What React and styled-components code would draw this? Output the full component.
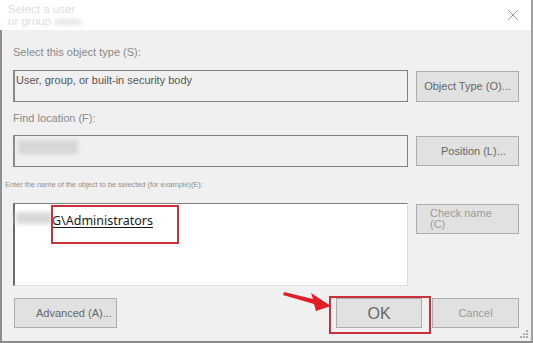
import React from 'react';
import styled, { createGlobalStyle } from 'styled-components';

const GlobalStyle = createGlobalStyle`
  html, body {
    margin: 0;
    padding: 0;
    background: #ffffff;
  }
  * { box-sizing: border-box; }
`;

const Window = styled.div`
  position: relative;
  width: 533px;
  height: 343px;
  display: flex;
  flex-direction: column;
  font-family: "Liberation Sans", Arial, sans-serif;
  background: #f0f0f0;
  border-right: 2px solid #a0a0a0;
  border-bottom: 2px solid #8c8c8c;
  overflow: hidden;
`;

const TitleBar = styled.div`
  height: 30px;
  background: #ffffff;
  display: flex;
  justify-content: space-between;
  align-items: flex-start;
  padding: 3px 12px 0 8px;
  flex-shrink: 0;
`;

const Title = styled.div`
  display: flex;
  flex-direction: column;
`;

const TitleLine = styled.div`
  color: #dedede;
  font-size: 11.5px;
  line-height: 12px;
  height: 12px;
  white-space: nowrap;
`;

const Blur = styled.span`
  display: inline-block;
  width: ${p => p.w}px;
  height: ${p => p.h}px;
  background: ${p => p.c || '#e6e6e6'};
  filter: blur(2px);
  vertical-align: middle;
  margin-left: ${p => p.ml || 0}px;
`;

const Close = styled.div`
  margin-top: 6px;
  display: flex;
`;

const Body = styled.div`
  flex: 1;
  display: flex;
  flex-direction: column;
  border-left: 2px solid #8f8f8f;
  padding: 16px 12px 0 11px;
`;

const Label = styled.div`
  color: ${p => p.small ? '#909090' : '#8a8a8a'};
  font-size: ${p => p.small ? '7.6px' : '11px'};
  line-height: 12px;
  margin-left: ${p => p.small ? -8 : 0}px;
  margin-bottom: ${p => p.mb}px;
  letter-spacing: ${p => p.small ? '-0.1px' : '0'};
`;

const Row = styled.div`
  display: flex;
  align-items: flex-start;
  gap: 8px;
  margin-bottom: ${p => p.mb}px;
`;

const Field = styled.div`
  position: relative;
  width: 395px;
  height: ${p => p.h}px;
  background: ${p => p.white ? '#ffffff' : '#f0f0f0'};
  border: 1px solid #7f7f7f;
  border-left: 2px solid ${p => p.white ? '#6b6b6b' : '#8a8a8a'};
  border-right: 1px solid ${p => p.white ? '#dcdcdc' : '#7f7f7f'};
  border-bottom: 1px solid ${p => p.white ? '#dcdcdc' : '#7f7f7f'};
  display: flex;
  align-items: flex-start;
  padding: ${p => p.pad || '2px 0 0 1px'};
  color: #555555;
  font-size: 11px;
`;

const Button = styled.div`
  width: ${p => p.w || 103}px;
  height: ${p => p.h || 30}px;
  margin-top: ${p => p.mt || 0}px;
  background: #e1e1e1;
  border: 1px solid #adadad;
  color: ${p => p.muted ? '#9a9a9a' : '#666666'};
  font-size: ${p => p.big ? '16px' : '11px'};
  display: flex;
  align-items: center;
  justify-content: ${p => p.align || 'center'};
  padding-left: ${p => p.pl || 0}px;
  line-height: 11px;
  flex-shrink: 0;
`;

const Name = styled.span`
  font-family: "Noto Sans", "Liberation Sans", sans-serif;
  color: #1a1a1a;
  font-size: 12.5px;
  text-decoration: underline;
  text-underline-offset: 2px;
`;

const Footer = styled.div`
  display: flex;
  align-items: flex-start;
  gap: 10px;
  padding-left: 1px;
`;

const Spacer = styled.div`
  flex: 1;
`;

const Highlight = styled.div`
  position: absolute;
  left: ${p => p.x}px;
  top: ${p => p.y}px;
  width: ${p => p.w}px;
  height: ${p => p.h}px;
  border: 2px solid #c8303c;
  pointer-events: none;
`;

const Overlay = styled.svg`
  position: absolute;
  left: 0;
  top: 0;
  pointer-events: none;
`;

const Grip = styled.svg`
  position: absolute;
  right: 2px;
  bottom: 2px;
`;

export default function App() {
  return (
    <>
      <GlobalStyle />
      <Window>
        <TitleBar>
          <Title>
            <TitleLine>Select a user</TitleLine>
            <TitleLine>or group<Blur w={26} h={6} ml={4} /></TitleLine>
          </Title>
          <Close>
            <svg width="12" height="12" viewBox="0 0 12 12">
              <path d="M1 1L11 11M11 1L1 11" stroke="#9a9a9a" strokeWidth="1" fill="none" />
            </svg>
          </Close>
        </TitleBar>
        <Body>
          <Label mb={12}>Select this object type (S):</Label>
          <Row mb={10}>
            <Field h={32} pad="3px 0 0 1px">User, group, or built-in security body</Field>
            <Button h={31} mt={1}>Object Type (O)...</Button>
          </Row>
          <Label mb={11}>Find location (F):</Label>
          <Row mb={12}>
            <Field h={32} pad="4px 0 0 3px">
              <Blur w={60} h={14} c="#d6d6d6" />
            </Field>
            <Button h={30} mt={1} align="flex-start" pl={24}>Position (L)...</Button>
          </Row>
          <Label small mb={12}>Enter the name of the object to be selected (for example)(E):</Label>
          <Row mb={12}>
            <Field white h={83} pad="8px 0 0 1px">
              <Blur w={36} h={12} c="#d8d8d8" />
              <Name>G\Administrators</Name>
            </Field>
            <Button h={30} mt={1} muted align="flex-start" pl={13}>
              <span>Check name<br />(C)</span>
            </Button>
          </Row>
          <Footer>
            <Button w={103} align="flex-start" pl={21}>Advanced (A)...</Button>
            <Spacer />
            <Button w={86} big>OK</Button>
            <Button w={87} muted>Cancel</Button>
          </Footer>
        </Body>
        <Highlight x={51} y={205} w={128} h={39} />
        <Highlight x={329} y={296} w={102} h={38} />
        <Overlay width="533" height="343">
          <path d="M284 292 L313 299 L311 293 L331 306 L316 311 L314 304 L283 295 Z" fill="#e01e28" />
        </Overlay>
        <Grip width="10" height="10" viewBox="0 0 10 10">
          <g fill="#b0b0b0">
            <rect x="7" y="1" width="2" height="2" />
            <rect x="4" y="4" width="2" height="2" />
            <rect x="7" y="4" width="2" height="2" />
            <rect x="1" y="7" width="2" height="2" />
            <rect x="4" y="7" width="2" height="2" />
            <rect x="7" y="7" width="2" height="2" />
          </g>
        </Grip>
      </Window>
    </>
  );
}
